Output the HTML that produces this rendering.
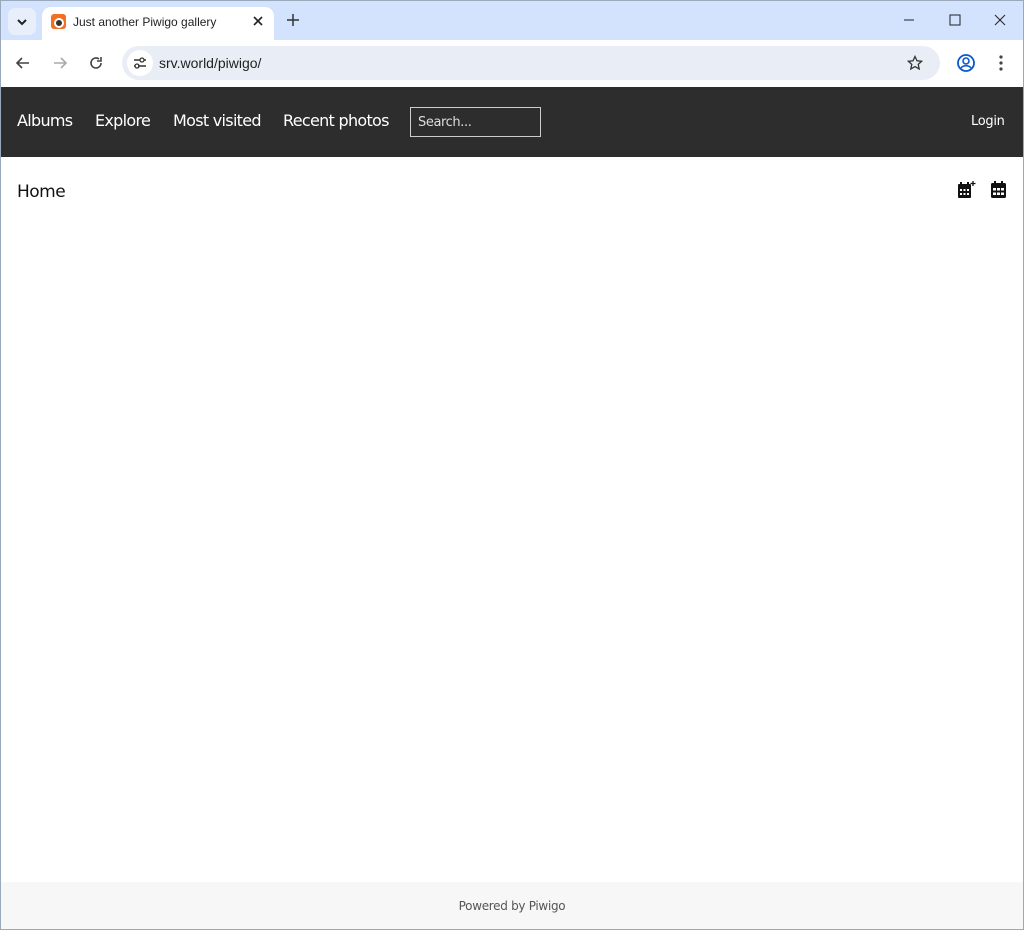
<!DOCTYPE html>
<html><head><meta charset="utf-8"><style>
*{box-sizing:border-box;margin:0;padding:0}
body{width:1024px;height:930px;overflow:hidden;font-family:"Liberation Sans",sans-serif;background:#fff;position:relative}
.tabbar{position:absolute;left:0;top:0;width:1024px;height:40px;background:#d3e3fd;border:1px solid #9aa8bb;border-bottom:none}
.tabbtn{position:absolute;left:7px;top:7px;width:28px;height:27px;background:#e8effb;border-radius:7px}
.tab{position:absolute;left:41px;top:6px;width:232px;height:36px;background:#fff;border-radius:9px 9px 0 0}
.fav{position:absolute;left:9px;top:7px;width:15px;height:15px;background:#f36f21;border-radius:3px}
.fav:after{content:"";position:absolute;left:3px;top:4px;width:6px;height:6px;border:2px solid #fff;border-radius:50%;background:#333}
.tab span{position:absolute;left:31px;top:8px;font-size:12px;color:#222}
.toolbar{position:absolute;left:0;top:40px;width:1024px;height:47px;background:#fff;border-left:1px solid #9aa8bb;border-right:1px solid #9aa8bb}
.omni{position:absolute;left:121px;top:6px;width:818px;height:34px;background:#e9eef6;border-radius:17px}
.omni .ic{position:absolute;left:5px;top:4px;width:26px;height:26px;background:#fff;border-radius:50%}
.omni span{position:absolute;left:37px;top:9px;font-size:14px;color:#1f1f1f}
nav{position:absolute;left:0;top:87px;width:1024px;height:70px;background:#2d2d2d}
nav a{position:absolute;top:24px;color:#fff;font-size:16px;text-decoration:none;font-family:"DejaVu Sans","Liberation Sans",sans-serif;letter-spacing:-0.7px}
.search{position:absolute;left:410px;top:20px;width:131px;height:30px;border:1px solid #ccc;color:#ddd;font-size:13px;padding:7px 7px;font-family:"DejaVu Sans",sans-serif;letter-spacing:-0.4px}
.home{position:absolute;left:17px;top:182px;font-size:17px;color:#111;font-family:"DejaVu Sans",sans-serif;letter-spacing:-0.5px}
.footer{position:absolute;left:1px;top:882px;width:1022px;height:47px;background:#f7f7f7;text-align:center;font-size:12px;color:#555;padding-top:17px;font-family:"DejaVu Sans",sans-serif;letter-spacing:-0.3px}
.frame{position:absolute;left:0;top:87px;width:1px;height:843px;background:#9aa8bb}
.frame.r{left:1023px}
</style></head><body>
<div class="tabbar">
<div class="tabbtn"><svg width="28" height="27"><path d="M10 12l4 4 4-4" stroke="#222" stroke-width="2" fill="none"/></svg></div>
<div class="tab"><div class="fav"></div><span>Just another Piwigo gallery</span>
<svg style="position:absolute;left:210px;top:8px" width="12" height="12"><path d="M2 2l8 8M10 2l-8 8" stroke="#222" stroke-width="1.6"/></svg></div>
<svg style="position:absolute;left:285px;top:12px" width="14" height="14"><path d="M7 1v12M1 7h12" stroke="#333" stroke-width="1.5"/></svg>
<svg style="position:absolute;left:902px;top:13px" width="12" height="12"><path d="M1 6h10" stroke="#222" stroke-width="1"/></svg>
<svg style="position:absolute;left:948px;top:13px" width="12" height="12"><rect x="1" y="1" width="10" height="10" fill="none" stroke="#222" stroke-width="1"/></svg>
<svg style="position:absolute;left:993px;top:13px" width="12" height="12"><path d="M1 1l10 10M11 1l-10 10" stroke="#222" stroke-width="1"/></svg>
</div>
<div class="toolbar">
<svg style="position:absolute;left:14px;top:15px" width="16" height="16"><path d="M14 8H2M7 3L2 8l5 5" stroke="#444" stroke-width="1.6" fill="none"/></svg>
<svg style="position:absolute;left:51px;top:15px" width="16" height="16"><path d="M2 8h12M9 3l5 5-5 5" stroke="#aaa" stroke-width="1.6" fill="none"/></svg>
<svg style="position:absolute;left:87px;top:15px" width="16" height="16"><path d="M13 8a5 5 0 1 1-2-4M13 2v4h-4" stroke="#444" stroke-width="1.6" fill="none"/></svg>
<div class="omni"><div class="ic"><svg width="26" height="26"><path d="M7 10h6M11 16h8M17 10h2M7 16h1" stroke="#333" stroke-width="1.5"/><circle cx="15" cy="10" r="2" fill="none" stroke="#333" stroke-width="1.3"/><circle cx="10" cy="16" r="2" fill="none" stroke="#333" stroke-width="1.3"/></svg></div><span>srv.world/piwigo/</span>
<svg style="position:absolute;left:785px;top:9px" width="16" height="16"><path d="M8 1.5l2 4.3 4.6.5-3.4 3.1 1 4.6L8 11.6 3.8 14l1-4.6L1.4 6.3 6 5.8z" fill="none" stroke="#333" stroke-width="1.3"/></svg></div>
<svg style="position:absolute;left:955px;top:13px" width="20" height="20"><circle cx="10" cy="10" r="8" fill="none" stroke="#0b57d0" stroke-width="1.8"/><circle cx="10" cy="8" r="3" fill="none" stroke="#0b57d0" stroke-width="1.6"/><path d="M5 15c2-3 8-3 10 0" fill="none" stroke="#0b57d0" stroke-width="1.6"/></svg>
<svg style="position:absolute;left:997px;top:14px" width="6" height="18"><circle cx="3" cy="3" r="1.6" fill="#444"/><circle cx="3" cy="9" r="1.6" fill="#444"/><circle cx="3" cy="15" r="1.6" fill="#444"/></svg>
</div>
<nav>
<a style="left:17px">Albums</a><a style="left:95px">Explore</a><a style="left:173px">Most visited</a><a style="left:283px">Recent photos</a>
<div class="search">Search...</div>
<a style="left:971px;top:27px;font-size:13px;letter-spacing:-0.3px">Login</a>
</nav>
<div class="home">Home</div>
<svg style="position:absolute;left:957px;top:180px" width="20" height="20"><rect x="1" y="4" width="13" height="14" rx="1" fill="#111"/><g fill="#fff"><rect x="3" y="9" width="2" height="2"/><rect x="6.5" y="9" width="2" height="2"/><rect x="10" y="9" width="2" height="2"/><rect x="3" y="13" width="2" height="2"/><rect x="6.5" y="13" width="2" height="2"/><rect x="10" y="13" width="2" height="2"/></g><rect x="3" y="2" width="2" height="4" fill="#111"/><rect x="10" y="2" width="2" height="4" fill="#111"/><path d="M16 1v5M13.5 3.5h5" stroke="#111" stroke-width="1.3"/></svg>
<svg style="position:absolute;left:990px;top:180px" width="18" height="20"><rect x="1" y="3" width="15" height="15" rx="1.5" fill="#111"/><g fill="#fff"><rect x="3" y="8" width="3" height="2.5"/><rect x="7" y="8" width="3" height="2.5"/><rect x="11" y="8" width="3" height="2.5"/><rect x="3" y="12.5" width="3" height="2.5"/><rect x="7" y="12.5" width="3" height="2.5"/><rect x="11" y="12.5" width="3" height="2.5"/></g><rect x="4" y="1" width="2" height="4" fill="#111"/><rect x="11" y="1" width="2" height="4" fill="#111"/></svg>
<div class="frame"></div><div class="frame r"></div>
<div class="footer">Powered by Piwigo</div>
<div style="position:absolute;left:0;top:929px;width:1024px;height:1px;background:#9aa8bb"></div>
</body></html>
